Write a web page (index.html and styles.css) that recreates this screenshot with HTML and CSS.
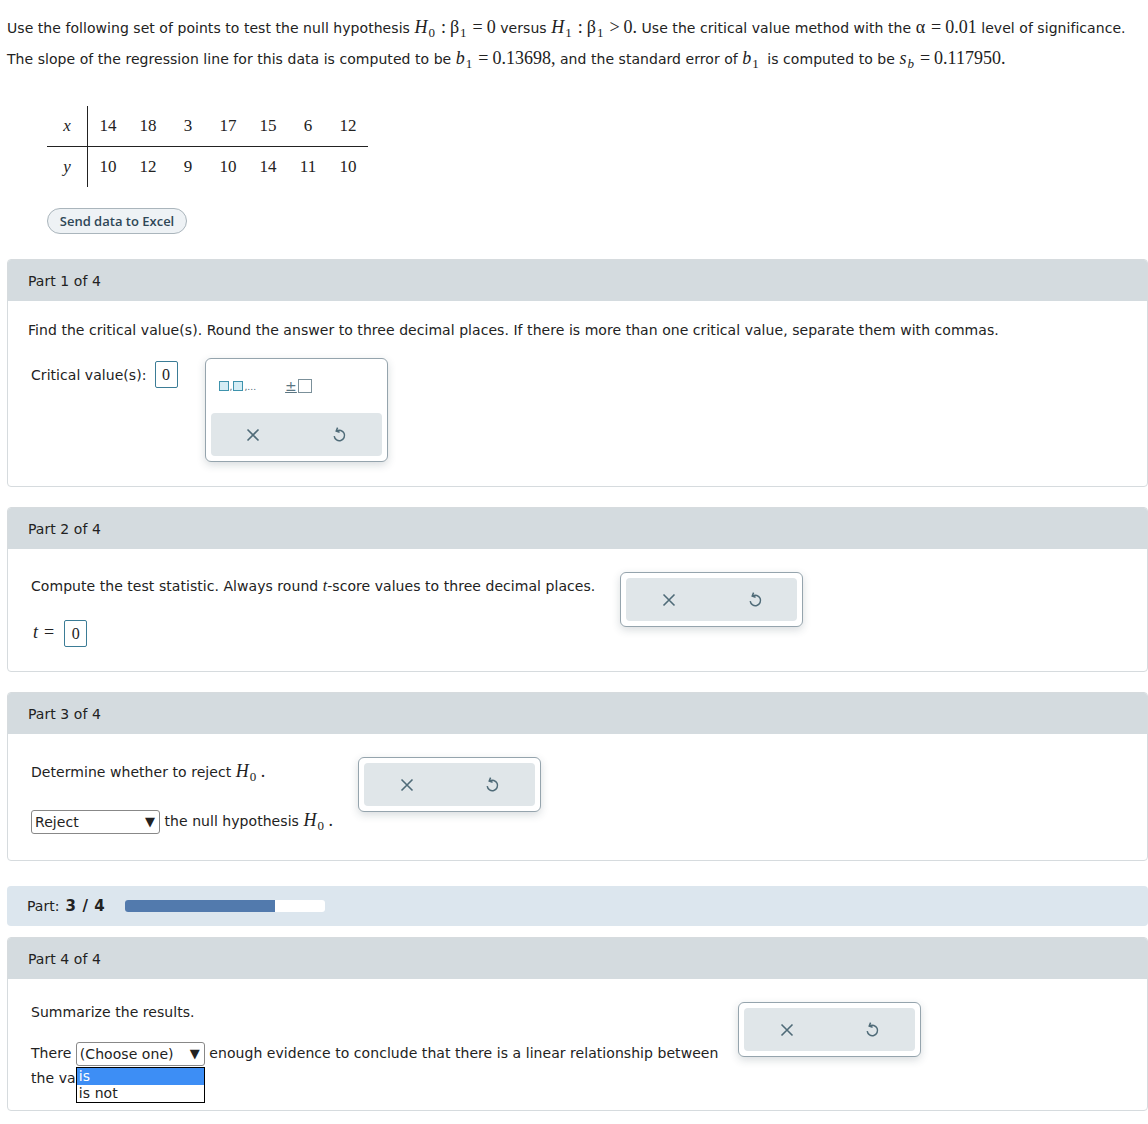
FILE: index.html
```html
<!DOCTYPE html>
<html>
<head>
    <title>Regression slope test</title>
    <link rel="stylesheet" href="styles.css">
</head>
<body>

    <p class="intro">Use the following set of points to test the null hypothesis
        <span class="m"><i>H</i><sub>0</sub><span class="rel">:</span>β<sub>1</sub><span class="rel">=</span>0</span> versus
        <span class="m"><i>H</i><sub>1</sub><span class="rel">:</span>β<sub>1</sub><span class="rel">&gt;</span>0.</span> Use the critical value method with the
        <span class="m">α<span class="rel">=</span>0.01</span> level of significance.</p>
    <p class="intro">The slope of the regression line for this data is computed to be
        <span class="m"><i>b</i><sub>1</sub><span class="rel">=</span>0.13698,</span> and the standard error of
        <span class="m m-gap"><i>b</i><sub>1</sub></span> is computed to be
        <span class="m"><i>s</i><sub><i>b</i></sub><span class="rel">=</span>0.117950.</span></p>

    <!-- data table: label column has the vertical rule -->
    <table class="data">
        <tr class="row-x">
            <th><i>x</i></th>
            <td>14</td><td>18</td><td>3</td><td>17</td><td>15</td><td>6</td><td>12</td>
        </tr>
        <tr>
            <th><i>y</i></th>
            <td>10</td><td>12</td><td>9</td><td>10</td><td>14</td><td>11</td><td>10</td>
        </tr>
    </table>

    <button class="excel-btn">Send data to Excel</button>

    <!-- Part 1 -->
    <section class="part">
        <div class="part-head">Part 1 of 4</div>
        <div class="part-body part-one">
            <p class="ask">Find the critical value(s). Round the answer to three decimal places. If there is more than one critical value, separate them with commas.</p>
            <div class="qrow">
                <div class="answer">Critical value(s): <span class="box">0</span></div>
                <div class="keypad keypad-tall">
                    <div class="keypad-icons">
                        <span class="ic-list"><span class="sq"></span><span class="cm">,</span><span class="sq"></span><span class="cm">,...</span></span>
                        <span class="ic-pm"><span class="pm">±</span><span class="sq-gray"></span></span>
                    </div>
                    <div class="keypad-btns">
                        <span class="kbtn"><svg width="14" height="14" viewBox="0 0 14 14"><path d="M1.5 1.5 L12.5 12.5 M12.5 1.5 L1.5 12.5" stroke="#4f6b78" stroke-width="1.6" fill="none"/></svg></span>
                        <span class="kbtn"><svg width="14" height="17" viewBox="0 0 14 17"><path d="M4.6 5 A5.2 5.2 0 1 1 2.2 10.2" stroke="#4f6b78" stroke-width="1.5" fill="none"/><path d="M5.6 1.6 L4.2 5 L7.6 6.2" stroke="#4f6b78" stroke-width="1.5" fill="none"/></svg></span>
                    </div>
                </div>
            </div>
        </div>
    </section>

    <!-- Part 2 -->
    <section class="part">
        <div class="part-head">Part 2 of 4</div>
        <div class="part-body qrow">
            <div class="answer">
                <p class="ask">Compute the test statistic. Always round <i class="mi">t</i>-score values to three decimal places.</p>
                <div class="t-row"><span class="m"><i>t</i><span class="rel rel-wide">=</span></span><span class="box">0</span></div>
            </div>
            <div class="keypad">
                <div class="keypad-btns">
                    <span class="kbtn"><svg width="14" height="14" viewBox="0 0 14 14"><path d="M1.5 1.5 L12.5 12.5 M12.5 1.5 L1.5 12.5" stroke="#4f6b78" stroke-width="1.6" fill="none"/></svg></span>
                    <span class="kbtn"><svg width="14" height="17" viewBox="0 0 14 17"><path d="M4.6 5 A5.2 5.2 0 1 1 2.2 10.2" stroke="#4f6b78" stroke-width="1.5" fill="none"/><path d="M5.6 1.6 L4.2 5 L7.6 6.2" stroke="#4f6b78" stroke-width="1.5" fill="none"/></svg></span>
                </div>
            </div>
        </div>
    </section>

    <!-- Part 3 -->
    <section class="part">
        <div class="part-head">Part 3 of 4</div>
        <div class="part-body part-three qrow">
            <div class="answer">
                <p class="ask">Determine whether to reject <span class="m"><i>H</i><sub>0</sub> .</span></p>
                <div class="sel-row"><span class="select select-wide">Reject<span class="arrow">▼</span></span> the null hypothesis <span class="m"><i>H</i><sub>0</sub> .</span></div>
            </div>
            <div class="keypad">
                <div class="keypad-btns">
                    <span class="kbtn"><svg width="14" height="14" viewBox="0 0 14 14"><path d="M1.5 1.5 L12.5 12.5 M12.5 1.5 L1.5 12.5" stroke="#4f6b78" stroke-width="1.6" fill="none"/></svg></span>
                    <span class="kbtn"><svg width="14" height="17" viewBox="0 0 14 17"><path d="M4.6 5 A5.2 5.2 0 1 1 2.2 10.2" stroke="#4f6b78" stroke-width="1.5" fill="none"/><path d="M5.6 1.6 L4.2 5 L7.6 6.2" stroke="#4f6b78" stroke-width="1.5" fill="none"/></svg></span>
                </div>
            </div>
        </div>
    </section>

    <!-- progress -->
    <div class="progress">
        Part: <b>3 / 4</b>
        <span class="bar"><span class="bar-fill" style="width: 75%"></span></span>
    </div>

    <!-- Part 4 -->
    <section class="part">
        <div class="part-head">Part 4 of 4</div>
        <div class="part-body part-four qrow">
            <div class="answer answer-wrap">
                <p class="ask ask-four">Summarize the results.</p>
                <p class="summary">There <span class="select-holder"><span class="select select-wide">(Choose one)<span class="arrow">▼</span></span><span class="dropdown"><span class="opt opt-on">is</span><span class="opt">is not</span></span></span> enough evidence to conclude that there is a linear relationship between the variables.</p>
            </div>
            <div class="keypad">
                <div class="keypad-btns">
                    <span class="kbtn"><svg width="14" height="14" viewBox="0 0 14 14"><path d="M1.5 1.5 L12.5 12.5 M12.5 1.5 L1.5 12.5" stroke="#4f6b78" stroke-width="1.6" fill="none"/></svg></span>
                    <span class="kbtn"><svg width="14" height="17" viewBox="0 0 14 17"><path d="M4.6 5 A5.2 5.2 0 1 1 2.2 10.2" stroke="#4f6b78" stroke-width="1.5" fill="none"/><path d="M5.6 1.6 L4.2 5 L7.6 6.2" stroke="#4f6b78" stroke-width="1.5" fill="none"/></svg></span>
                </div>
            </div>
        </div>
    </section>

</body>
</html>
```

FILE: styles.css
```css
body {
    font-family: "DejaVu Sans", Verdana, sans-serif;
    font-size: 14px;
    letter-spacing: 0.05px;
    color: #222;
    margin: 0;
    padding: 12px 0 0 0;
    background-color: #fff;
}

.intro {
    margin: 0 0 0 7px;
    line-height: 30px;
    white-space: nowrap;
}

/* math bits, MathJax-ish */
.m {
    font-family: "Liberation Serif", "Times New Roman", serif;
    font-size: 18px;
    letter-spacing: 0;
}

.m sub {
    font-size: 13px;
    vertical-align: -4px;
    line-height: 0;
    margin-left: 1px;
}

.m-gap {
    margin-right: 4px;
}

.rel {
    margin: 0 4px 0 6px;
}

.rel-wide {
    margin: 0 10px 0 6px;
}

.mi {
    font-family: "Liberation Serif", serif;
    font-size: 16px;
}

/** Data table **/

.data {
    border-collapse: collapse;
    margin: 32px 0 0 47px;
    font-family: "Liberation Serif", "Times New Roman", serif;
    font-size: 17px;
}

.data th,
.data td {
    width: 40px;
    height: 40px;
    padding: 0;
    text-align: center;
    font-weight: normal;
}

.data th {
    border-right: 1px solid #222;
}

.row-x th,
.row-x td {
    border-bottom: 1px solid #222;
}

.excel-btn {
    display: block;
    margin: 21px 0 0 47px;
    width: 140px;
    height: 26px;
    padding: 0;
    font-family: "Open Sans", sans-serif;
    font-size: 13px;
    font-weight: 600;
    color: #2f4757;
    background-color: #eef2f5;
    border: 1px solid #aab5bc;
    border-radius: 13px;
}

/** Parts **/

.part {
    margin: 0 0 20px 7px;
    width: 1139px;
    border: 1px solid #d6dbde;
    border-radius: 4px;
}

.part:first-of-type {
    margin-top: 25px;
}

.part-head {
    height: 41px;
    line-height: 42px;
    padding-left: 20px;
    background-color: #d4dbdf;
    border-radius: 3px 3px 0 0;
}

.part-body {
    padding: 23px 24px 24px 23px;
}

.ask {
    margin: 0;
    line-height: 20px;
}

.qrow {
    display: flex;
    align-items: flex-start;
    gap: 25px;
}

.part-one {
    padding: 19px 24px 24px 20px;
}

.part-one .qrow {
    margin-top: 18px;
    padding-left: 3px;
    gap: 27px;
}

.part-one .answer {
    padding-top: 3px;
    display: flex;
    align-items: center;
    gap: 8px;
}

.answer {
    padding-top: 4px;
}

.box {
    display: inline-block;
    box-sizing: border-box;
    width: 23px;
    height: 27px;
    line-height: 25px;
    text-align: center;
    border: 1px solid #3b7c96;
    border-radius: 2px;
    font-family: "Liberation Serif", serif;
    font-size: 16px;
    vertical-align: middle;
}

.t-row {
    margin-top: 24px;
    margin-left: 2px;
}

/** keypad popups **/

.keypad {
    flex: none;
    box-sizing: border-box;
    width: 183px;
    border: 1px solid #95a4ad;
    border-radius: 6px;
    background-color: #fff;
    box-shadow: 0 3px 8px rgba(40, 60, 70, 0.18);
    padding: 5px;
}

.keypad-tall {
    padding-top: 0;
}

.keypad-icons {
    height: 54px;
    display: flex;
    align-items: center;
    padding-left: 8px;
    gap: 28px;
}

.ic-list {
    display: inline-flex;
    align-items: flex-end;
    color: #4a6572;
    font-size: 9px;
}

.sq {
    display: inline-block;
    width: 8px;
    height: 8px;
    border: 1.5px solid #3e93ad;
    background-color: #d4edf5;
}

.cm {
    margin: 0 1px;
    line-height: 7px;
}

.ic-pm {
    display: inline-flex;
    align-items: center;
    color: #5a7582;
}

.pm {
    font-size: 14px;
    text-decoration: underline;
}

.sq-gray {
    display: inline-block;
    width: 12px;
    height: 12px;
    border: 1.5px solid #7b909a;
    margin-left: 1px;
}

.keypad-btns {
    display: flex;
    height: 43px;
    background-color: #e0e6e9;
    border-radius: 4px;
}

.kbtn {
    flex: 1;
    display: flex;
    align-items: center;
    justify-content: center;
}

/** fake selects **/

.part-three {
    padding-bottom: 26px;
}

.sel-row {
    margin-top: 28px;
}

.select {
    display: inline-block;
    position: relative;
    box-sizing: border-box;
    height: 24px;
    line-height: 22px;
    padding: 0 24px 0 3px;
    border: 1px solid #888;
    border-radius: 3px;
    background-color: #fff;
    vertical-align: middle;
    text-align: left;
}

.select-wide {
    width: 129px;
}

.arrow {
    position: absolute;
    right: 4px;
    top: 0;
    font-size: 13px;
}

.part-four {
    gap: 17px;
    padding-bottom: 20px;
}

.answer-wrap {
    width: 690px;
}

.ask-four {
    margin-top: -4px;
}

.summary {
    margin: 19px 0 0 0;
    line-height: 24px;
}

.select-holder {
    position: relative;
    display: inline-block;
    vertical-align: middle;
}

.select-holder .select {
    display: block;
}

.dropdown {
    position: absolute;
    left: 0;
    top: 100%;
    margin-top: 1px;
    box-sizing: border-box;
    width: 129px;
    border: 1px solid #000;
    background-color: #fff;
    font-size: 14px;
    line-height: 17px;
    z-index: 2;
}

.opt {
    display: block;
    padding-left: 2px;
}

.opt-on {
    background-color: #3d8ef5;
    color: #fff;
}

/** progress strip **/

.progress {
    margin: 25px 0 11px 7px;
    width: 1121px;
    height: 40px;
    line-height: 40px;
    padding-left: 20px;
    background-color: #dce6ee;
    border-radius: 4px;
    display: flex;
    align-items: center;
    gap: 6px;
}

.progress b {
    font-size: 15px;
    letter-spacing: 0.6px;
    margin-right: 14px;
}

.bar {
    display: inline-block;
    width: 200px;
    height: 12px;
    background-color: #fff;
    border-radius: 3px;
    overflow: hidden;
}

.bar-fill {
    display: block;
    height: 100%;
    background-color: #527aad;
}
```
